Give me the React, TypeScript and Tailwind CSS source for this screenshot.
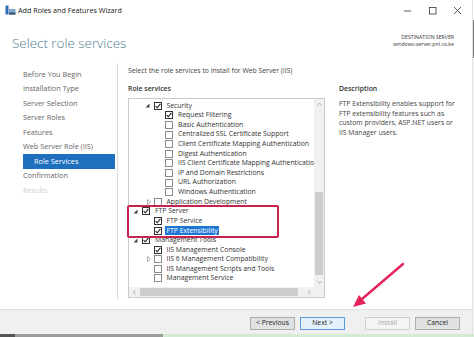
import React from "react";

type Row = { l: 1 | 2 | 3; t?: "open" | "closed"; c?: boolean; label: string; sel?: boolean };

const rows: Row[] = [
  { l: 2, t: "open", c: true, label: "Security" },
  { l: 3, c: true, label: "Request Filtering" },
  { l: 3, label: "Basic Authentication" },
  { l: 3, label: "Centralized SSL Certificate Support" },
  { l: 3, label: "Client Certificate Mapping Authentication" },
  { l: 3, label: "Digest Authentication" },
  { l: 3, label: "IIS Client Certificate Mapping Authentication" },
  { l: 3, label: "IP and Domain Restrictions" },
  { l: 3, label: "URL Authorization" },
  { l: 3, label: "Windows Authentication" },
  { l: 2, t: "closed", label: "Application Development" },
  { l: 1, t: "open", c: true, label: "FTP Server" },
  { l: 2, c: true, label: "FTP Service" },
  { l: 2, c: true, label: "FTP Extensibility", sel: true },
  { l: 1, t: "open", c: true, label: "Management Tools" },
  { l: 2, c: true, label: "IIS Management Console" },
  { l: 2, t: "closed", label: "IIS 6 Management Compatibility" },
  { l: 2, label: "IIS Management Scripts and Tools" },
  { l: 2, label: "Management Service" },
];

const nav = [
  "Before You Begin",
  "Installation Type",
  "Server Selection",
  "Server Roles",
  "Features",
  "Web Server Role (IIS)",
  "Role Services",
  "Confirmation",
  "Results",
];

const indent: Record<number, string> = { 1: "pl-[2px]", 2: "pl-[13.5px]", 3: "pl-[25px]" };

const Check = ({ on }: { on?: boolean }) => (
  <span
    className={`w-[8px] h-[8px] shrink-0 border bg-white flex items-center justify-center ${
      on ? "border-[#333]" : "border-[#8c8c8c]"
    }`}
  >
    {on && (
      <svg width="6" height="6" viewBox="0 0 6 6">
        <path d="M0.6 3.1 L2.3 4.8 L5.4 0.9" fill="none" stroke="#222" strokeWidth="1.1" />
      </svg>
    )}
  </span>
);

const Toggle = ({ t }: { t?: "open" | "closed" }) => (
  <span className="w-[11px] h-full shrink-0 flex items-center">
    {t === "open" && (
      <svg width="5" height="5" viewBox="0 0 5 5" className="ml-[2px]">
        <polygon points="4.5,0.5 4.5,4.5 0.5,4.5" fill="#444" />
      </svg>
    )}
    {t === "closed" && (
      <svg width="4" height="6" viewBox="0 0 4 6" className="ml-[4px]">
        <polygon points="0.5,0.5 3.5,3 0.5,5.5" fill="none" stroke="#9a9a9a" strokeWidth="0.8" />
      </svg>
    )}
  </span>
);

const Chevron = ({ dir }: { dir: "up" | "down" | "left" | "right" }) => {
  const d = {
    up: "M0.5 3.5 L2.5 1 L4.5 3.5",
    down: "M0.5 1 L2.5 3.5 L4.5 1",
    left: "M3.5 0.5 L1 2.5 L3.5 4.5",
    right: "M1 0.5 L3.5 2.5 L1 4.5",
  }[dir];
  return (
    <svg width="5" height="5" viewBox="0 0 5 5">
      <path d={d} fill="none" stroke="#a6a6a6" strokeWidth="0.8" />
    </svg>
  );
};

const Btn = ({ children, kind }: { children: React.ReactNode; kind?: "next" | "off" }) => (
  <button
    className={`h-[13px] w-[45px] border text-[6.8px] leading-none flex items-center justify-center ${
      kind === "next"
        ? "bg-[#e5f1fb] border-[#5a9be0] text-[#222]"
        : kind === "off"
        ? "bg-[#f4f4f4] border-[#cfcfcf] text-[#a8a8a8]"
        : "bg-[#e1e1e1] border-[#adadad] text-[#222]"
    }`}
  >
    {children}
  </button>
);

export default function App() {
  return (
    <div className="relative w-[474px] h-[337px] overflow-hidden bg-white text-[#333] font-['Open_Sans','Noto_Sans',sans-serif]">
      <div className="flex h-[334px]">
        <div className="flex-1 flex flex-col">
          {/* title bar */}
          <div className="h-[20px] flex items-center pl-[5px] pr-[10px] shrink-0">
            <svg width="11" height="10" viewBox="0 0 11 10" className="mr-[2px]">
              <rect x="0.5" y="0.5" width="3" height="9" fill="#2d6cb5" />
              <rect x="4" y="4" width="6.5" height="5.5" fill="#7fa7cf" />
              <rect x="4" y="7.5" width="6.5" height="2" fill="#3d4f66" />
            </svg>
            <span className="text-[7.2px] text-[#222]">Add Roles and Features Wizard</span>
            <div className="ml-auto flex items-center gap-[16px]">
              <svg width="9" height="9" viewBox="0 0 9 9">
                <path d="M1 5 H8" stroke="#333" strokeWidth="0.8" />
              </svg>
              <svg width="9" height="9" viewBox="0 0 9 9">
                <rect x="1.5" y="1.5" width="6.5" height="6.5" fill="none" stroke="#333" strokeWidth="0.8" />
              </svg>
              <svg width="9" height="9" viewBox="0 0 9 9">
                <path d="M1 1 L8 8 M8 1 L1 8" stroke="#333" strokeWidth="0.8" />
              </svg>
            </div>
          </div>

          {/* header */}
          <div className="h-[40px] shrink-0 flex items-start justify-between pl-[12px] pr-[18px]">
            <h1 className="mt-[14px] text-[13.4px] leading-[18px] font-light text-[#4f7f8f]">Select role services</h1>
            <div className="mt-[14px] text-right text-[#333]">
              <div className="text-[5.2px] leading-[7px]">DESTINATION SERVER</div>
              <div className="text-[5.2px] leading-[7px]">windows-server.pnl.co.ke</div>
            </div>
          </div>

          {/* body */}
          <div className="flex-1 flex">
            <div className="w-[118px] shrink-0 mt-[3px] mb-[9px] border-r border-[#dadada] pl-[23px] pr-[2px] pt-[4px]">
              {nav.map((n) =>
                n === "Role Services" ? (
                  <div key={n} className="h-[14.5px] flex items-center pl-[11px] bg-[#1e6fbe] text-white text-[7.3px]">
                    {n}
                  </div>
                ) : (
                  <div
                    key={n}
                    className={`h-[14.5px] flex items-center text-[7.3px] ${
                      n === "Results" ? "text-[#cfcfcf]" : "text-[#666]"
                    }`}
                  >
                    {n}
                  </div>
                )
              )}
            </div>

            <div className="flex-1 pl-[10px] pt-[6px]">
              <p className="text-[6.85px] leading-[10px] text-[#444]">
                Select the role services to install for Web Server (IIS)
              </p>
              <div className="flex gap-[14px] mt-[8px]">
                <div className="w-[197px] shrink-0">
                  <div className="text-[6.9px] leading-[10px] font-semibold text-[#333]">Role services</div>
                  <div className="mt-[4px] h-[200px] border border-[#cacaca] flex flex-col">
                    <div className="h-[188px] flex">
                      <div className="flex-1 overflow-hidden pt-[2px]">
                        {rows.map((r) => (
                          <div
                            key={r.label}
                            className={`h-[9.6px] flex items-center whitespace-nowrap text-[6.85px] text-[#333] ${indent[r.l]}`}
                          >
                            <Toggle t={r.t} />
                            <Check on={r.c} />
                            {r.sel ? (
                              <span className="ml-[3.5px] px-[1.5px] leading-[9px] bg-[#1f77d4] text-white">{r.label}</span>
                            ) : (
                              <span className="ml-[5px]">{r.label}</span>
                            )}
                          </div>
                        ))}
                      </div>
                      <div className="w-[10px] shrink-0 bg-[#f0f0f0] flex flex-col">
                        <div className="h-[10px] flex items-center justify-center">
                          <Chevron dir="up" />
                        </div>
                        <div className="h-[83px]" />
                        <div className="h-[83px] mx-[1px] bg-[#cdcdcd]" />
                        <div className="flex-1" />
                        <div className="h-[10px] flex items-center justify-center">
                          <Chevron dir="down" />
                        </div>
                      </div>
                    </div>
                    <div className="h-[10px] flex">
                      <div className="flex-1 bg-[#f0f0f0] flex items-center">
                        <div className="w-[10px] h-full flex items-center justify-center">
                          <Chevron dir="left" />
                        </div>
                        <div className="ml-[1px] w-[158px] h-[8px] bg-[#cdcdcd]" />
                        <div className="flex-1" />
                        <div className="w-[10px] h-full flex items-center justify-center">
                          <Chevron dir="right" />
                        </div>
                      </div>
                      <div className="w-[10px] bg-[#f0f0f0]" />
                    </div>
                  </div>
                </div>
                <div className="flex-1">
                  <div className="text-[6.9px] leading-[10px] font-semibold text-[#333]">Description</div>
                  <p className="mt-[5px] text-[6.85px] leading-[9.7px] text-[#444]">
                    FTP Extensibility enables support for
                    <br />
                    FTP extensibility features such as
                    <br />
                    custom providers, ASP.NET users or
                    <br />
                    IIS Manager users.
                  </p>
                </div>
              </div>
            </div>
          </div>

          {/* footer */}
          <div className="h-[25px] shrink-0 bg-[#f0f0f0] border-t border-[#dedede] flex justify-end items-start pt-[7px] pr-[12px] gap-[5px]">
            <Btn>&lt; Previous</Btn>
            <Btn kind="next">Next &gt;</Btn>
            <div className="ml-[15px]">
              <Btn kind="off">Install</Btn>
            </div>
            <Btn>Cancel</Btn>
          </div>
        </div>
        <div className="w-[2px] flex flex-col border-l border-[#e2e2e2]">
          <div className="h-[20px] bg-white" />
          <div className="h-[38px] bg-[#777]" />
          <div className="flex-1 bg-[#f4f4f4]" />
        </div>
      </div>
      <div className="h-[3px] flex">
        <div className="w-[15px] bg-[#555]" />
        <div className="w-[148px] bg-[#9c9c9c]" />
        <div className="flex-1 bg-[#d3ead3]" />
      </div>

      {/* annotation: red box */}
      <div className="absolute left-[127px] top-[205px] w-[152px] h-[33px] border-2 border-[#c8234e] rounded-[2px]" />
      {/* annotation: arrow */}
      <svg className="absolute left-[340px] top-[255px]" width="80" height="60" viewBox="340 255 80 60">
        <path d="M403 264 L362 299" stroke="#e5245c" strokeWidth="2.4" strokeLinecap="round" />
        <polygon points="353,307 366,303.5 359,295" fill="#e5245c" />
      </svg>
    </div>
  );
}
